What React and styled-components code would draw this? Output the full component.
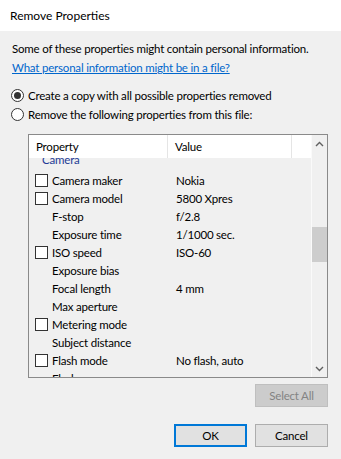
import styled, { createGlobalStyle } from "styled-components";

const GlobalStyle = createGlobalStyle`
  html, body {
    margin: 0;
    padding: 0;
    background: #f0f0f0;
  }
  * { box-sizing: border-box; }
`;

const properties = [
  { name: "Camera maker", value: "Nokia", check: true },
  { name: "Camera model", value: "5800 Xpres", check: true },
  { name: "F-stop", value: "f/2.8" },
  { name: "Exposure time", value: "1/1000 sec." },
  { name: "ISO speed", value: "ISO-60", check: true },
  { name: "Exposure bias", value: "" },
  { name: "Focal length", value: "4 mm" },
  { name: "Max aperture", value: "" },
  { name: "Metering mode", value: "", check: true },
  { name: "Subject distance", value: "" },
  { name: "Flash mode", value: "No flash, auto", check: true },
  { name: "Flash energy", value: "" },
];

function App() {
  return (
    <>
      <GlobalStyle />
      <Dialog>
        <TitleBar>Remove Properties</TitleBar>
        <Body>
          <Info>Some of these properties might contain personal information.</Info>
          <Link href="#">What personal information might be in a file?</Link>
          <RadioGroup>
            <RadioRow>
              <Radio $on />
              Create a copy with all possible properties removed
            </RadioRow>
            <RadioRow>
              <Radio />
              Remove the following properties from this file:
            </RadioRow>
          </RadioGroup>
          <ListBox>
            <ListMain>
              <Header>
                <HeadCell $w={139}>Property</HeadCell>
                <HeadCell $w={124}>Value</HeadCell>
              </Header>
              <Viewport>
                <Scroller style={{ transform: "translateY(-8px)" }}>
                  <GroupRow>Camera</GroupRow>
                  {properties.map((p) => (
                    <Row key={p.name}>
                      <NameCell>
                        <Check $show={p.check} />
                        {p.name}
                      </NameCell>
                      <ValueCell>{p.value}</ValueCell>
                    </Row>
                  ))}
                </Scroller>
              </Viewport>
            </ListMain>
            <ScrollBar>
              <Arrow>
                <svg width="9" height="6" viewBox="0 0 9 6">
                  <path d="M1 5 L4.5 1.5 L8 5" fill="none" stroke="#606060" strokeWidth="1.4" />
                </svg>
              </Arrow>
              <Track>
                <Thumb />
              </Track>
              <Arrow>
                <svg width="9" height="6" viewBox="0 0 9 6">
                  <path d="M1 1 L4.5 4.5 L8 1" fill="none" stroke="#606060" strokeWidth="1.4" />
                </svg>
              </Arrow>
            </ScrollBar>
          </ListBox>
          <SelectRow>
            <Button disabled>Select All</Button>
          </SelectRow>
          <Footer>
            <Button $default>OK</Button>
            <Button>Cancel</Button>
          </Footer>
        </Body>
      </Dialog>
    </>
  );
}

export default App;

const Dialog = styled.div`
  width: 341px;
  height: 459px;
  display: flex;
  flex-direction: column;
  font-family: Lato, "Noto Sans", sans-serif;
  font-size: 11.5px;
  letter-spacing: -0.2px;
  color: #000;
  background: #f0f0f0;
  overflow: hidden;
`;

const TitleBar = styled.div`
  height: 31px;
  background: #fff;
  padding-left: 10px;
  display: flex;
  align-items: center;
  font-size: 12px;
  letter-spacing: 0;
`;

const Body = styled.div`
  flex: 1;
  display: flex;
  flex-direction: column;
  padding: 8px 13px 0 12px;
`;

const Info = styled.div`
  line-height: 19px;
  white-space: nowrap;
`;

const Link = styled.a`
  line-height: 19px;
  color: #0066cc;
  text-decoration: underline;
  white-space: nowrap;
`;

const RadioGroup = styled.div`
  margin-top: 9px;
  display: flex;
  flex-direction: column;
`;

const RadioRow = styled.label`
  height: 19px;
  display: flex;
  align-items: center;
  gap: 4px;
  margin-left: -1px;
  white-space: nowrap;
`;

const Radio = styled.span`
  width: 13px;
  height: 13px;
  border-radius: 50%;
  border: 1px solid #333;
  background: #fff;
  display: flex;
  align-items: center;
  justify-content: center;
  &::after {
    content: "";
    width: 7px;
    height: 7px;
    border-radius: 50%;
    background: #333;
    display: ${(p) => (p.$on ? "block" : "none")};
  }
`;

const ListBox = styled.div`
  margin-top: 10px;
  margin-left: 16px;
  width: 300px;
  height: 244px;
  border: 1px solid #8a8a8a;
  display: flex;
`;

const ListMain = styled.div`
  flex: 1;
  display: flex;
  flex-direction: column;
  min-width: 0;
  border-right: 1px solid #fafafa;
`;

const Header = styled.div`
  height: 23px;
  background: #fff;
  display: flex;
  position: relative;
  z-index: 1;
`;

const HeadCell = styled.div`
  width: ${(p) => p.$w}px;
  padding-left: 7px;
  display: flex;
  align-items: center;
  border-right: 1px solid #e5e5e5;
`;

const Viewport = styled.div`
  flex: 1;
  overflow: hidden;
`;

const Scroller = styled.div`
  display: flex;
  flex-direction: column;
`;

const GroupRow = styled.div`
  height: 21px;
  line-height: 20px;
  padding-left: 13px;
  color: #1e3c96;
`;

const Row = styled.div`
  height: 18px;
  display: flex;
  align-items: center;
`;

const NameCell = styled.div`
  width: 139px;
  padding-left: 6px;
  display: flex;
  align-items: center;
  gap: 4px;
  white-space: nowrap;
`;

const Check = styled.span`
  width: 13px;
  height: 13px;
  border: 1px solid ${(p) => (p.$show ? "#333" : "transparent")};
  background: ${(p) => (p.$show ? "#fff" : "transparent")};
`;

const ValueCell = styled.div`
  padding-left: 8px;
  white-space: nowrap;
`;

const ScrollBar = styled.div`
  width: 15px;
  display: flex;
  flex-direction: column;
  background: #f0f0f0;
`;

const Arrow = styled.div`
  height: 17px;
  display: flex;
  align-items: center;
  justify-content: center;
`;

const Track = styled.div`
  flex: 1;
  padding-top: 75px;
`;

const Thumb = styled.div`
  height: 35px;
  background: #cdcdcd;
`;

const SelectRow = styled.div`
  margin-top: 6px;
  display: flex;
  justify-content: flex-end;
`;

const Footer = styled.div`
  margin-top: 17px;
  display: flex;
  justify-content: flex-end;
  gap: 8px;
`;

const Button = styled.button`
  width: 73px;
  height: 23px;
  font-family: inherit;
  font-size: 11.5px;
  letter-spacing: -0.2px;
  padding: 0;
  background: ${(p) => (p.disabled ? "#cccccc" : "#e1e1e1")};
  color: ${(p) => (p.disabled ? "#838383" : "#000")};
  border: ${(p) =>
    p.$default ? "2px solid #0078d7" : p.disabled ? "1px solid #bfbfbf" : "1px solid #adadad"};
`;
